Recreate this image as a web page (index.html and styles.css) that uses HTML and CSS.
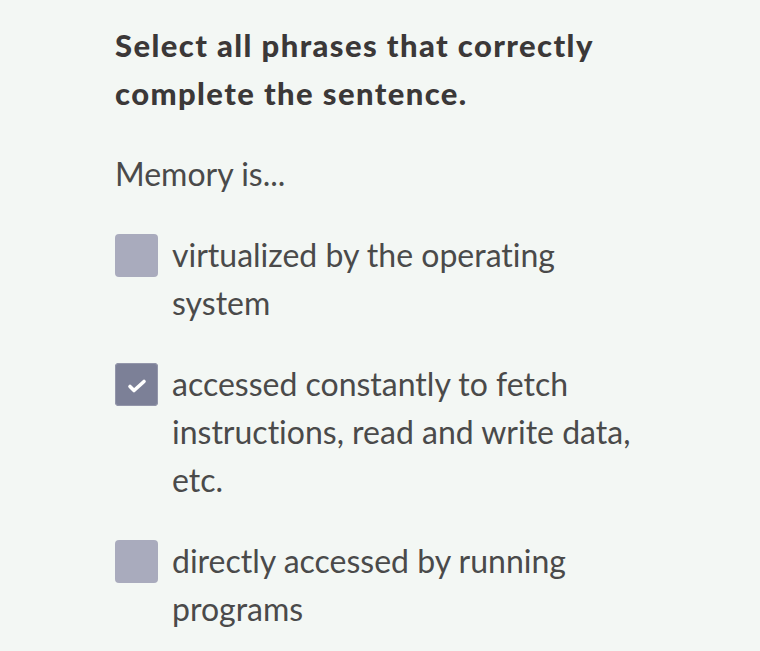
FILE: index.html
```html
<!DOCTYPE html>
<html>
<head>
<meta charset="utf-8">
<link rel="stylesheet" href="styles.css">
</head>
<body>
<main class="quiz">
  <h1 class="prompt">Select all phrases that correctly complete the sentence.</h1>
  <p class="stem">Memory is...</p>
  <ul class="options">
    <li class="option">
      <span class="box"></span>
      <span class="label">virtualized by the operating system</span>
    </li>
    <li class="option">
      <span class="box checked">
        <svg class="tick" viewBox="0 0 43 43" width="43" height="43"><path d="M15 23.5 L19 27.5 L29 18.5" fill="none" stroke="#fff" stroke-width="3.6" stroke-linecap="round" stroke-linejoin="round"/></svg>
      </span>
      <span class="label">accessed constantly to fetch instructions, read and write data, etc.</span>
    </li>
    <li class="option">
      <span class="box"></span>
      <span class="label">directly accessed by running programs</span>
    </li>
  </ul>
</main>
</body>
</html>
```
FILE: styles.css
```css
html, body {
  margin: 0;
  padding: 0;
  background: #f3f7f4;
}
body {
  font-family: Lato, "Open Sans", sans-serif;
  color: #4a4a4a;
  font-variant-ligatures: none;
}
.quiz {
  padding: 21px 0 0 115px;
  width: 530px;
}
.prompt {
  margin: 0;
  font-size: 31px;
  line-height: 48px;
  font-weight: 900;
  letter-spacing: 1.4px;
  color: #3b3838;
}
.stem {
  margin: 33px 0 0;
  font-size: 32px;
  line-height: 48px;
}
.options {
  list-style: none;
  margin: 0;
  padding: 0;
}
.option {
  display: flex;
  gap: 14px;
  margin-top: 33px;
  font-size: 32px;
  line-height: 48px;
}
.box {
  flex: 0 0 43px;
  width: 43px;
  height: 43px;
  margin-top: 3px;
  border-radius: 4px;
  background: #a9abbd;
  display: block;
}
.box.checked {
  background: #7c8097;
  box-shadow: inset 0 0 0 1px #9396aa;
}
.tick {
  display: block;
}
.label {
  flex: 1;
}
```
